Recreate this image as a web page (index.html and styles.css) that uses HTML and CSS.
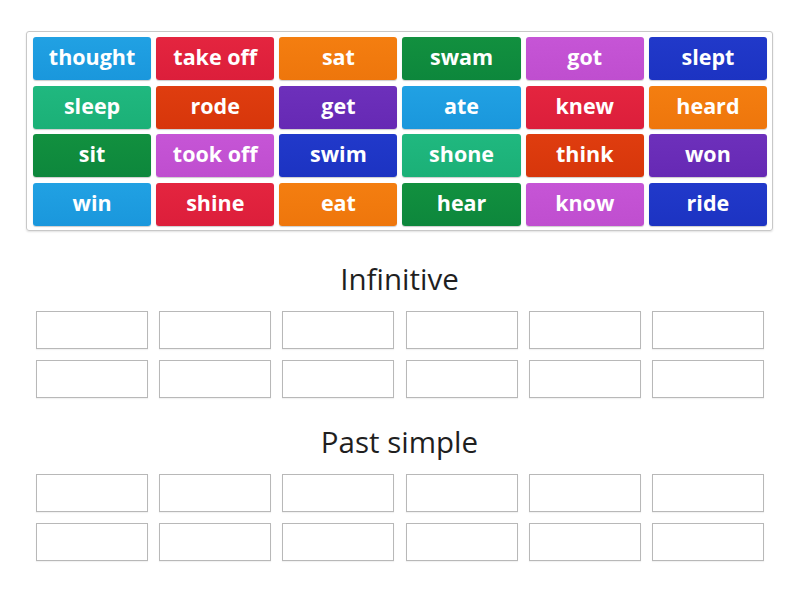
FILE: index.html
```html
<!DOCTYPE html>
<html>
<head>
<meta charset="utf-8">
<link rel="stylesheet" href="styles.css">
</head>
<body>
<div class="page">
  <div class="bank">
    <div class="tile c1">thought</div>
    <div class="tile c2">take off</div>
    <div class="tile c3">sat</div>
    <div class="tile c4">swam</div>
    <div class="tile c5">got</div>
    <div class="tile c6">slept</div>
    <div class="tile c7">sleep</div>
    <div class="tile c8">rode</div>
    <div class="tile c9">get</div>
    <div class="tile c1">ate</div>
    <div class="tile c2">knew</div>
    <div class="tile c3">heard</div>
    <div class="tile c4">sit</div>
    <div class="tile c5">took off</div>
    <div class="tile c6">swim</div>
    <div class="tile c7">shone</div>
    <div class="tile c8">think</div>
    <div class="tile c9">won</div>
    <div class="tile c1">win</div>
    <div class="tile c2">shine</div>
    <div class="tile c3">eat</div>
    <div class="tile c4">hear</div>
    <div class="tile c5">know</div>
    <div class="tile c6">ride</div>
  </div>

  <div class="group">
    <h2 class="group-title">Infinitive</h2>
    <div class="slots">
      <div class="slot"></div><div class="slot"></div><div class="slot"></div>
      <div class="slot"></div><div class="slot"></div><div class="slot"></div>
      <div class="slot"></div><div class="slot"></div><div class="slot"></div>
      <div class="slot"></div><div class="slot"></div><div class="slot"></div>
    </div>
  </div>

  <div class="group">
    <h2 class="group-title">Past simple</h2>
    <div class="slots">
      <div class="slot"></div><div class="slot"></div><div class="slot"></div>
      <div class="slot"></div><div class="slot"></div><div class="slot"></div>
      <div class="slot"></div><div class="slot"></div><div class="slot"></div>
      <div class="slot"></div><div class="slot"></div><div class="slot"></div>
    </div>
  </div>
</div>
</body>
</html>
```

FILE: styles.css
```css
html, body {
  margin: 0;
  padding: 0;
  background: #ffffff;
}

body {
  font-family: "Open Sans", "Liberation Sans", sans-serif;
  width: 800px;
  height: 600px;
  overflow: hidden;
}

.page {
  padding: 31px 27px 0 26px;
}

.bank {
  border: 1px solid #c8c8c8;
  border-radius: 3px;
  padding: 5px 5px 4px 6px;
  display: grid;
  grid-template-columns: repeat(6, 1fr);
  grid-auto-rows: 43px;
  column-gap: 5px;
  row-gap: 5.5px;
  box-shadow: 0 1px 2px rgba(0, 0, 0, 0.12);
}

.tile {
  border-radius: 3px;
  color: #ffffff;
  font-weight: 700;
  font-size: 21.5px;
  display: flex;
  align-items: center;
  justify-content: center;
  padding-bottom: 4px;
  box-sizing: border-box;
  box-shadow: 0 1px 1px rgba(0, 0, 0, 0.2);
  white-space: nowrap;
}

.c1 { background: linear-gradient(#21a1e3, #1a97dc); }
.c2 { background: linear-gradient(#e4253f, #dc1e3b); }
.c3 { background: linear-gradient(#f47e10, #ee760c); }
.c4 { background: linear-gradient(#12903f, #0d873c); }
.c5 { background: linear-gradient(#c655d6, #bf4ecf); }
.c6 { background: linear-gradient(#2139ca, #1c33c2); }
.c7 { background: linear-gradient(#20b87f, #1bb077); }
.c8 { background: linear-gradient(#df3d0f, #d7360b); }
.c9 { background: linear-gradient(#6d30bb, #6629b4); }

.group {
  margin-top: 30px;
}

.group + .group {
  margin-top: 26px;
}

.group-title {
  margin: 0 0 14px 0;
  text-align: center;
  font-weight: 400;
  font-size: 29.5px;
  line-height: 36px;
  color: #1f1f1f;
}

.slots {
  margin: 0 9px 0 10px;
  display: grid;
  grid-template-columns: repeat(6, 1fr);
  grid-auto-rows: 38px;
  column-gap: 11.2px;
  row-gap: 11px;
}

.slot {
  border: 1px solid #b8b8b8;
  background: #ffffff;
  box-shadow: 0 1px 1px rgba(0, 0, 0, 0.05);
}
```
